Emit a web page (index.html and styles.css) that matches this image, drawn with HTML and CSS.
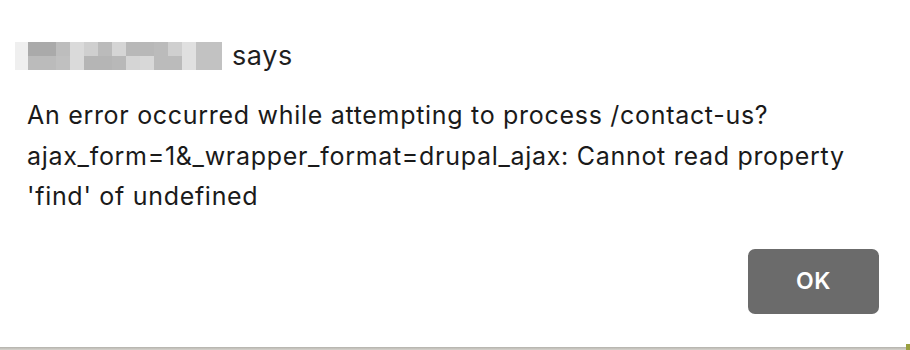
FILE: index.html
```html
<!DOCTYPE html>
<html>
<head>
<meta charset="utf-8">
<link rel="stylesheet" href="styles.css">
</head>
<body>
<div class="dialog">
  <div class="title">
    <span class="blur" aria-hidden="true"></span>
    <span class="says">says</span>
  </div>
  <p class="message">An error occurred while attempting to process /contact-us?<br>ajax_form=1&amp;_wrapper_format=drupal_ajax: Cannot read property<br>'find' of undefined</p>
  <div class="actions">
    <button class="ok">OK</button>
  </div>
</div>
<div class="edge"><span class="corner"></span></div>
</body>
</html>
```
FILE: styles.css
```css
html, body {
  margin: 0;
  padding: 0;
  background: #ffffff;
}
body {
  width: 910px;
  height: 350px;
  overflow: hidden;
  font-family: Inter, "Noto Sans", "Liberation Sans", sans-serif;
  color: #1a1a1a;
}
.dialog {
  height: 347px;
  box-sizing: border-box;
  padding: 41px 31px 0 27px;
  display: flex;
  flex-direction: column;
}
.title {
  display: flex;
  align-items: center;
  gap: 10px;
  height: 30px;
  margin-left: -12px;
}
.blur {
  display: block;
  width: 207px;
  height: 28px;
  background:
    linear-gradient(to right,
      #efefef 0 13px, #aaaaaa 13px 41px, #bdbdbd 41px 55px, #dadada 55px 69px,
      #cfcfcf 69px 83px, #bbbbbb 83px 97px, #d5d5d5 97px 111px, #b8b8b8 111px 139px,
      #bbbbbb 139px 153px, #cfcfcf 153px 167px, #e0e0e0 167px 181px, #c2c2c2 181px 207px) top / 100% 14px no-repeat,
    linear-gradient(to right,
      #efefef 0 13px, #bbbbbb 13px 41px, #c0c0c0 41px 55px, #dadada 55px 69px,
      #b5b5b5 69px 97px, #b8b8b8 97px 111px, #d5d5d5 111px 125px, #d8d8d8 125px 139px,
      #bbbbbb 139px 167px, #e0e0e0 167px 181px, #c2c2c2 181px 207px) bottom / 100% 14px no-repeat;
}
.says {
  font-size: 27px;
  letter-spacing: 0.6px;
  line-height: 30px;
  color: #1f1f1f;
}
.message {
  margin: 24px 0 0 0;
  font-size: 25px;
  letter-spacing: 0.7px;
  line-height: 40.5px;
  color: #1a1a1a;
}
.actions {
  display: flex;
  justify-content: flex-end;
  margin-top: 32px;
}
.ok {
  width: 131px;
  height: 65px;
  border: none;
  border-radius: 7px;
  background: #6b6b6b;
  color: #ffffff;
  font-family: Inter, "Noto Sans", "Liberation Sans", sans-serif;
  font-size: 23px;
  font-weight: 600;
  letter-spacing: 0.5px;
  padding: 0;
}
.edge {
  position: relative;
  height: 3px;
  background: linear-gradient(#b3b1ab, #d6d4ce);
}
.corner {
  position: absolute;
  right: 0;
  bottom: 0;
  width: 4px;
  height: 6px;
  background: #9aa040;
}
```
